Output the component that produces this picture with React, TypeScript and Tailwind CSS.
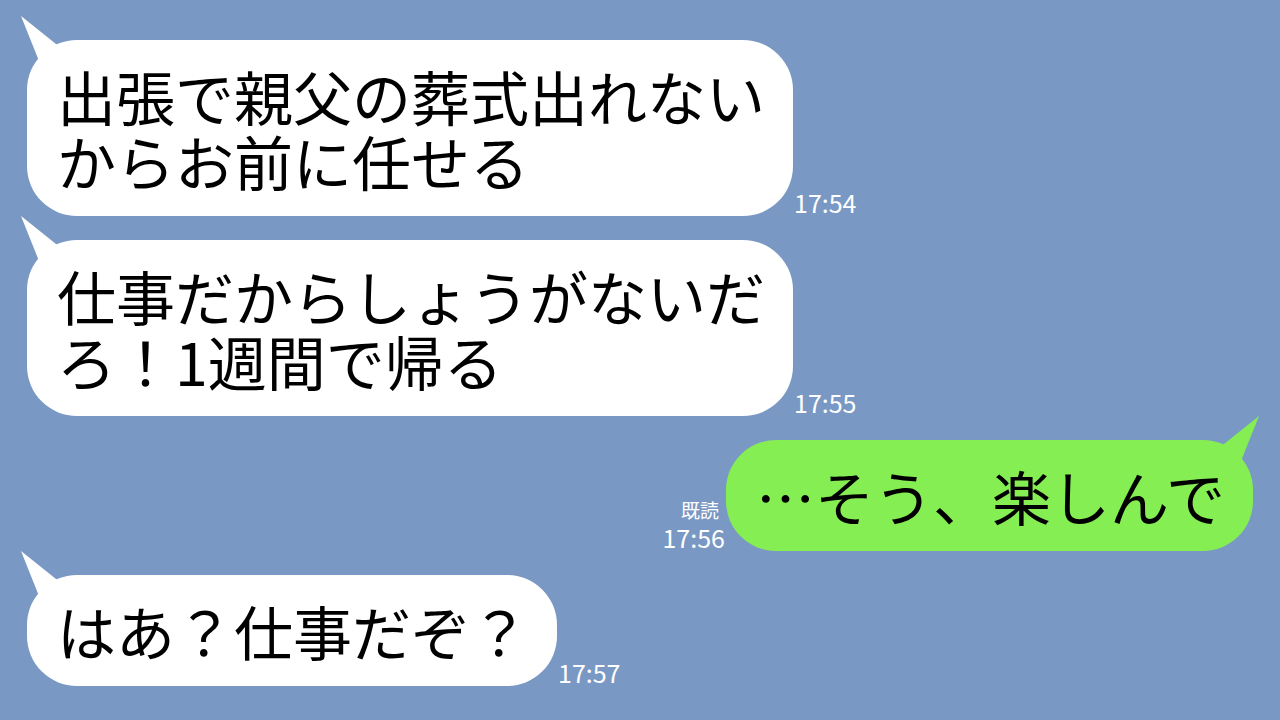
import React from "react";

const FONT = { fontFamily: '"Noto Sans CJK JP", "Noto Sans", sans-serif' };

function LeftTail() {
  return (
    <svg className="absolute left-[-6px] top-[-24px]" width="60" height="60" viewBox="0 0 60 60">
      <polygon points="0,0 40,32 20,50" fill="#ffffff" />
    </svg>
  );
}

function RightTail() {
  return (
    <svg className="absolute right-[-6px] top-[-24px]" width="60" height="60" viewBox="0 0 60 60">
      <polygon points="60,0 20,32 40,50" fill="#85ee53" />
    </svg>
  );
}

function Time({ t }: { t: string }) {
  return <div className="text-[25px] leading-none text-white mb-[1px]">{t}</div>;
}

function Left({ lines, time }: { lines: string[]; time: string }) {
  return (
    <div className="flex items-end gap-[1px]">
      <div className="relative bg-white rounded-[50px] pl-[30px] pr-[28px] py-[23px] text-[59px] leading-[65px] text-black whitespace-nowrap">
        <LeftTail />
        <div className="relative">
          {lines.map((l, i) => (
            <div key={i}>{l}</div>
          ))}
        </div>
      </div>
      <Time t={time} />
    </div>
  );
}

export default function App() {
  return (
    <div className="w-[1280px] h-[720px] bg-[#7a98c4] overflow-hidden" style={FONT}>
      <div className="flex flex-col gap-[24px] pt-[40px] pl-[27px] pr-[27px]">
        <Left lines={["出張で親父の葬式出れない", "からお前に任せる"]} time="17:54" />
        <Left lines={["仕事だからしょうがないだ", "ろ！1週間で帰る"]} time="17:55" />
        <div className="flex items-end justify-end gap-[1px]">
          <div className="flex flex-col items-end text-white mb-[1px]">
            <div className="text-[19px] leading-none mr-[6px] mb-[6px]">既読</div>
            <div className="text-[25px] leading-none">17:56</div>
          </div>
          <div className="relative bg-[#85ee53] rounded-[50px] pl-[30px] pr-[28px] py-[23px] text-[59px] leading-[65px] text-black whitespace-nowrap">
            <RightTail />
            <div className="relative">…そう、楽しんで</div>
          </div>
        </div>
        <Left lines={["はあ？仕事だぞ？"]} time="17:57" />
      </div>
    </div>
  );
}
